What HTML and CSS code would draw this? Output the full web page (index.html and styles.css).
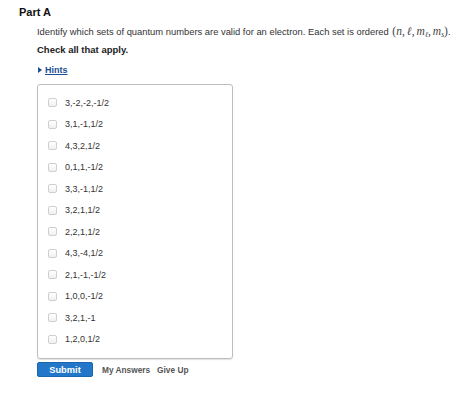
FILE: index.html
```html
<!DOCTYPE html>
<html>
<head>
<meta charset="utf-8">
<link rel="stylesheet" href="styles.css">
</head>
<body>
<div class="part">
  <h2 class="part-title">Part A</h2>
  <div class="content">
    <p class="question">Identify which sets of quantum numbers are valid for an electron. Each set is ordered <span class="math">(<i>n</i><span class="c">,</span><i>ℓ</i><span class="c">,</span><i>m</i><sub><i>ℓ</i></sub><span class="c">,</span><i>m</i><sub><i>s</i></sub>)</span>.</p>
    <p class="instr">Check all that apply.</p>
    <div class="hints"><span class="tri"></span><a class="hint-link">Hints</a></div>
    <div class="box">
      <label class="opt"><span class="cb"></span>3,-2,-2,-1/2</label>
      <label class="opt"><span class="cb"></span>3,1,-1,1/2</label>
      <label class="opt"><span class="cb"></span>4,3,2,1/2</label>
      <label class="opt"><span class="cb"></span>0,1,1,-1/2</label>
      <label class="opt"><span class="cb"></span>3,3,-1,1/2</label>
      <label class="opt"><span class="cb"></span>3,2,1,1/2</label>
      <label class="opt"><span class="cb"></span>2,2,1,1/2</label>
      <label class="opt"><span class="cb"></span>4,3,-4,1/2</label>
      <label class="opt"><span class="cb"></span>2,1,-1,-1/2</label>
      <label class="opt"><span class="cb"></span>1,0,0,-1/2</label>
      <label class="opt"><span class="cb"></span>3,2,1,-1</label>
      <label class="opt"><span class="cb"></span>1,2,0,1/2</label>
    </div>
    <div class="actions">
      <button class="submit">Submit</button>
      <a class="act">My Answers</a>
      <a class="act">Give Up</a>
    </div>
  </div>
</div>
</body>
</html>
```
FILE: styles.css
```css
html, body {
  margin: 0;
  padding: 0;
  background: #fff;
}
body {
  font-family: "Liberation Sans", Arial, sans-serif;
  color: #222;
}
.part {
  padding: 4px 0 0 19px;
}
.part-title {
  margin: 0;
  font-size: 11px;
  font-weight: bold;
  line-height: 16px;
  color: #111;
}
.content {
  padding-left: 18px;
}
.question {
  margin: 5px 0 0;
  font-size: 9.4px;
  line-height: 14px;
  color: #333;
  white-space: nowrap;
}
.math {
  font-family: "Liberation Serif", "DejaVu Serif", serif;
  font-size: 11.5px;
  line-height: 0;
  margin-left: 1px;
  color: #444;
}
.math .c {
  margin-right: 2px;
}
.math sub {
  font-size: 7.5px;
  vertical-align: -2px;
  line-height: 0;
}
.instr {
  margin: 4px 0 0;
  font-size: 9.5px;
  line-height: 14px;
  font-weight: bold;
  color: #222;
}
.hints {
  margin-top: 6px;
  display: flex;
  align-items: center;
  height: 14px;
  padding-left: 1px;
}
.tri {
  width: 0;
  height: 0;
  border-top: 3px solid transparent;
  border-bottom: 3px solid transparent;
  border-left: 4px solid #1a4f93;
  margin-right: 3px;
}
.hint-link {
  font-size: 9px;
  font-weight: bold;
  color: #1a4f93;
  text-decoration: underline;
}
.box {
  margin-top: 7px;
  width: 194px;
  border: 1px solid #bdbdbd;
  border-radius: 3px;
  padding: 7px 0 8px;
  box-shadow: 0 1px 1px #e2e2e2;
}
.opt {
  display: flex;
  align-items: center;
  height: 21.5px;
  font-size: 9px;
  color: #333;
  padding-left: 10px;
}
.cb {
  box-sizing: border-box;
  width: 9px;
  height: 9px;
  border: 1px solid #cfcfcf;
  border-radius: 2px;
  margin-right: 8px;
  background: linear-gradient(#fff, #f0f0f0);
}
.actions {
  margin-top: 3px;
  display: flex;
  align-items: center;
}
.submit {
  width: 56px;
  height: 15px;
  background: #2277c9;
  border: 1px solid #1c66b0;
  border-radius: 2px;
  color: #fff;
  font-family: "Liberation Sans", Arial, sans-serif;
  font-weight: bold;
  font-size: 9.3px;
  padding: 0;
  margin-right: 9px;
}
.act {
  font-size: 8.3px;
  font-weight: bold;
  color: #555;
  margin-right: 7px;
}
```
